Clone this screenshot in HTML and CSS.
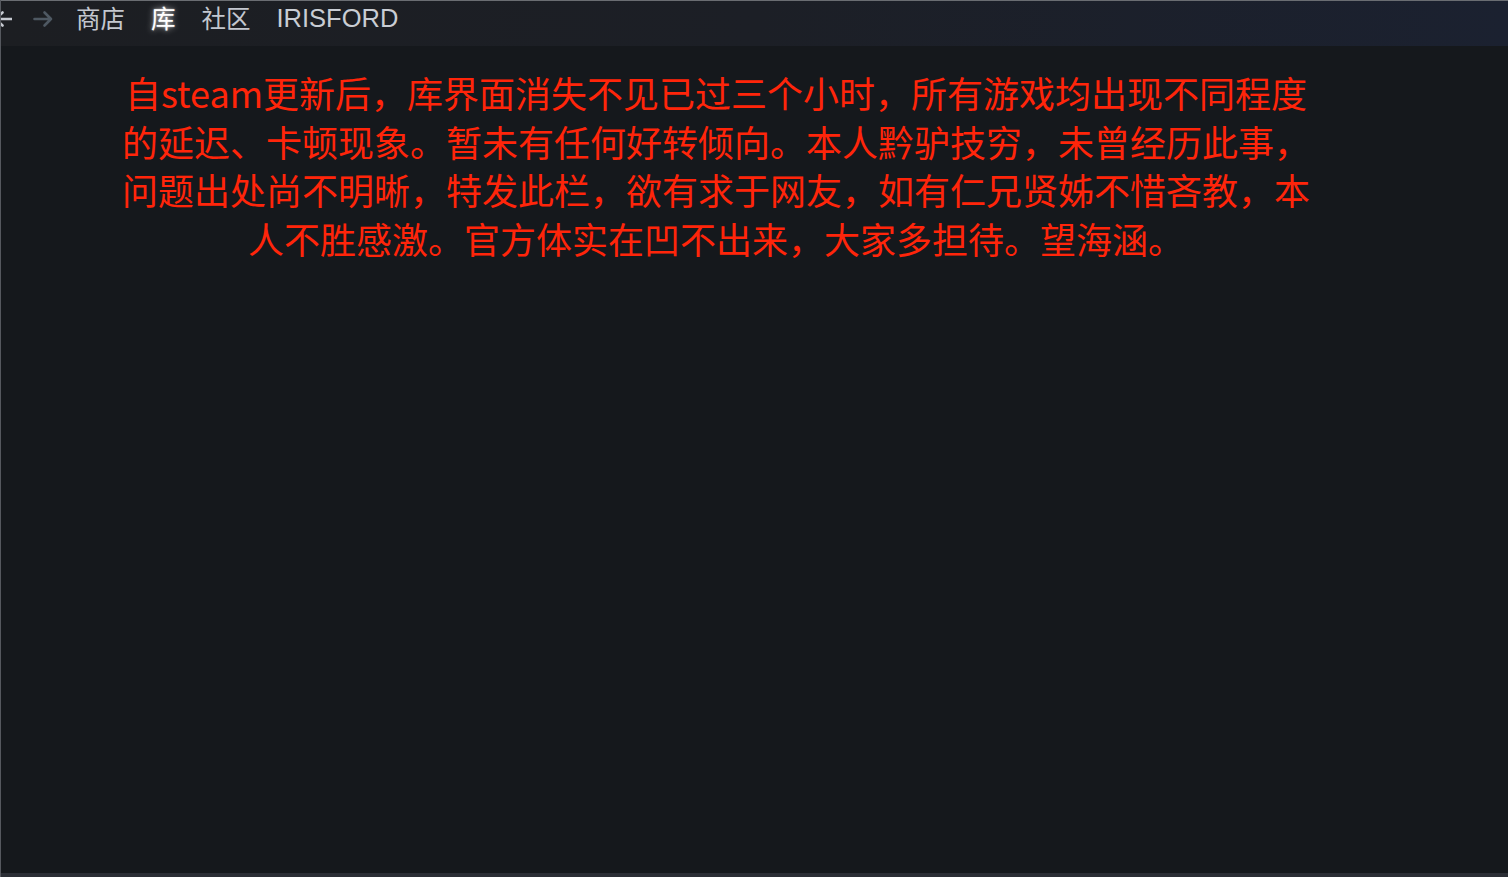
FILE: index.html
```html
<!DOCTYPE html>
<html lang="zh-CN">
<head>
<meta charset="utf-8">
<link rel="stylesheet" href="styles.css">
</head>
<body>
<div class="window">
  <header class="topbar">
    <span class="arrow back">
      <svg width="11" height="18" viewBox="8 0 11 18"><path d="M19 9H3M9.5 2.5L3 9L9.5 15.5" fill="none" stroke="#c6cad1" stroke-width="2.6" stroke-linecap="round" stroke-linejoin="round"/></svg>
    </span>
    <span class="arrow fwd">
      <svg width="20" height="18" viewBox="0 0 20 18"><path d="M1.5 9H18M11.5 2.5L18 9L11.5 15.5" fill="none" stroke="#4e5862" stroke-width="2.6" stroke-linecap="round" stroke-linejoin="round"/></svg>
    </span>
    <nav class="menu">
      <span class="item">商店</span>
      <span class="item active">库</span>
      <span class="item">社区</span>
      <span class="item user">IRISFORD</span>
    </nav>
  </header>
  <main class="content">
    <p class="notice">自steam更新后，库界面消失不见已过三个小时，所有游戏均出现不同程度的延迟、卡顿现象。暂未有任何好转倾向。本人黔驴技穷，未曾经历此事，问题出处尚不明晰，特发此栏，欲有求于网友，如有仁兄贤姊不惜吝教，本人不胜感激。官方体实在凹不出来，大家多担待。望海涵。</p>
  </main>
  <footer class="bottom"></footer>
</div>
</body>
</html>
```
FILE: styles.css
```css
html, body {
  margin: 0;
  padding: 0;
  height: 100%;
  background: #15181c;
  overflow: hidden;
}
.window {
  height: 877px;
  width: 1508px;
  display: flex;
  flex-direction: column;
  border-left: 1px solid #55585e;
  box-sizing: border-box;
  background: #15181c;
}
.topbar {
  height: 46px;
  flex: none;
  display: flex;
  align-items: center;
  background: linear-gradient(90deg, #1c1e22 0%, #1c1f26 50%, #1b2130 100%);
  border-top: 1px solid #6a6d72;
  box-sizing: border-box;
  padding-bottom: 10px;
  font-family: "Noto Sans CJK SC", "Liberation Sans", sans-serif;
}
.arrow {
  display: flex;
  align-items: center;
}
.fwd {
  margin-left: 21px;
}
.menu {
  display: flex;
  align-items: center;
  gap: 26px;
  margin-left: 23px;
}
.item {
  color: #c3c7cf;
  font-size: 24.5px;
  line-height: 1;
}
.active {
  color: #ffffff;
  text-shadow: 0 0 6px rgba(255,255,255,0.7), 0 0 2px rgba(255,255,255,0.6);
}
.user {
  font-family: "Liberation Sans", sans-serif;
  font-size: 25.5px;
  color: #c9cdd4;
}
.content {
  flex: 1;
  padding-top: 22px;
}
.notice {
  margin: 0 0 0 117px;
  width: 1196px;
  text-align: center;
  color: #ff250a;
  font-family: "Noto Sans CJK SC", "Liberation Sans", sans-serif;
  font-size: 36px;
  line-height: 48.5px;
}
.bottom {
  height: 4px;
  flex: none;
  background: #2b2e35;
}
```
